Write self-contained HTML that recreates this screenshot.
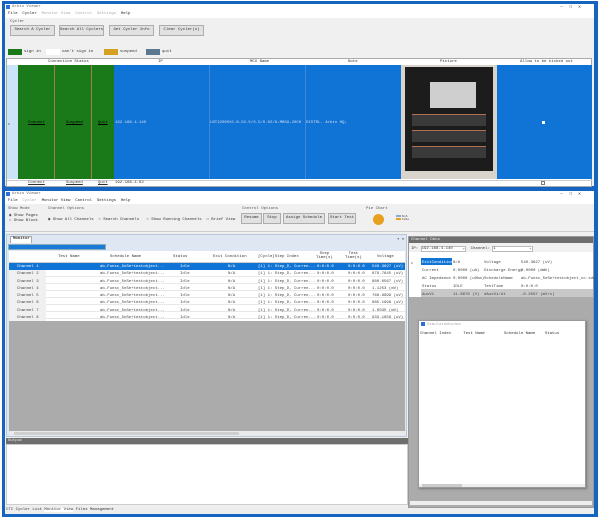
<!DOCTYPE html><html><head><style>
*{margin:0;padding:0;box-sizing:border-box}
body{width:600px;height:517px;background:#fff;position:relative;overflow:hidden;font-family:"Liberation Mono",monospace;font-size:4px;color:#333}
div{position:absolute}
.b{background:#e1e1e1;border:1px solid #adadad;text-align:center;line-height:9px;white-space:nowrap;overflow:hidden}
.t{white-space:nowrap}
</style></head><body>
<!-- top window -->
<div style="left:2px;top:1px;width:596px;height:189px;background:#1565c0"></div>
<div style="left:5px;top:4px;width:589px;height:182px;background:#f0f0f0"></div>
<div style="left:5px;top:4px;width:589px;height:6px;background:#fff"></div>
<div style="left:6px;top:5px;width:4px;height:4px;background:#2a6fd6"></div>
<div class="t" style="left:12px;top:5px;color:#666">Arbin Viewer</div>
<div class="t" style="left:560px;top:4px;color:#555;font-size:5px">–&nbsp;&nbsp;❐&nbsp;&nbsp;✕</div>
<div style="left:5px;top:10px;width:589px;height:8px;background:#fff"></div>
<div class="t" style="left:8px;top:12px;color:#222">File&nbsp; Cycler&nbsp; <span style="color:#aaa">Monitor View&nbsp; Control&nbsp; Settings</span>&nbsp; Help</div>
<div class="t" style="left:10px;top:20px;color:#555">Cycler</div>
<div class="b" style="left:10px;top:25px;width:45px;height:11px">Search A Cycler</div>
<div class="b" style="left:59px;top:25px;width:45px;height:11px">Search All Cyclers</div>
<div class="b" style="left:109px;top:25px;width:45px;height:11px">Get Cycler Info</div>
<div class="b" style="left:159px;top:25px;width:45px;height:11px">Clear Cycler(s)</div>
<div style="left:8px;top:49px;width:14px;height:6px;background:#1a7a1a"></div><div class="t" style="left:24px;top:50px">sign in</div>
<div style="left:46px;top:49px;width:14px;height:6px;background:#fff"></div><div class="t" style="left:62px;top:50px">can't sign in</div>
<div style="left:104px;top:49px;width:14px;height:6px;background:#d4a020"></div><div class="t" style="left:120px;top:50px">suspend</div>
<div style="left:146px;top:49px;width:14px;height:6px;background:#5a7890"></div><div class="t" style="left:162px;top:50px">quit</div>
<div style="left:6px;top:58px;width:586px;height:129px;background:#fff;border:1px solid #aaa"></div>
<div class="t" style="left:48px;top:60px">Connection Status</div>
<div class="t" style="left:158px;top:60px">IP</div>
<div class="t" style="left:250px;top:60px">MCU Name</div>
<div class="t" style="left:348px;top:60px">Note</div>
<div class="t" style="left:440px;top:60px">Picture</div>
<div class="t" style="left:520px;top:60px">Allow to be kicked out</div>
<div style="left:7px;top:65px;width:11px;height:114px;background:#cce4f7"></div>
<div class="t" style="left:8px;top:121px">▸</div>
<div style="left:18px;top:65px;width:96px;height:114px;background:#1a7a1a"></div>
<div style="left:54px;top:65px;width:1px;height:114px;background:#a08040"></div>
<div style="left:91px;top:65px;width:1px;height:114px;background:#a08040"></div>
<div class="t" style="left:28px;top:121px;text-decoration:underline;color:#000">Connect</div>
<div class="t" style="left:66px;top:121px;text-decoration:underline;color:#000">Suspend</div>
<div class="t" style="left:98px;top:121px;text-decoration:underline;color:#000">Quit</div>
<div style="left:114px;top:65px;width:287px;height:114px;background:#0f74d6"></div>
<div style="left:209px;top:65px;width:1px;height:114px;background:#3a8ae0"></div>
<div style="left:305px;top:65px;width:1px;height:114px;background:#3a8ae0"></div>
<div class="t" style="left:115px;top:121px;color:#dde">192.168.4.140</div>
<div class="t" style="left:210px;top:121px;color:#dde">LBT22000XC-B-5V-5/0.5/0.02/8-MBSA-20CH</div>
<div class="t" style="left:306px;top:121px;color:#dde">DISTRL- Arbin HQ;</div>
<div style="left:401px;top:65px;width:96px;height:114px;background:#d8d4cc"></div>
<div style="left:405px;top:67px;width:88px;height:104px;background:#1c1c1c"></div>
<div style="left:430px;top:82px;width:46px;height:26px;background:#cfcfcf"></div>
<div style="left:412px;top:114px;width:74px;height:12px;background:#3a3a3a;border-top:1px solid #b07050"></div>
<div style="left:412px;top:130px;width:74px;height:12px;background:#3a3a3a;border-top:1px solid #b07050"></div>
<div style="left:412px;top:146px;width:74px;height:12px;background:#3a3a3a;border-top:1px solid #b07050"></div>
<div style="left:497px;top:65px;width:95px;height:114px;background:#0f74d6"></div>
<div style="left:542px;top:121px;width:3px;height:3px;background:#fff"></div>
<div style="left:7px;top:180px;width:585px;height:1px;background:#ccc"></div>
<div class="t" style="left:28px;top:181px;text-decoration:underline">Connect</div>
<div class="t" style="left:66px;top:181px;text-decoration:underline">Suspend</div>
<div class="t" style="left:98px;top:181px;text-decoration:underline">Quit</div>
<div class="t" style="left:115px;top:181px">192.168.4.62</div>
<div style="left:541px;top:181px;width:4px;height:4px;border:1px solid #777"></div>

<!-- bottom window -->
<div style="left:2px;top:189px;width:596px;height:328px;background:#1565c0"></div>
<div style="left:5px;top:191px;width:589px;height:323px;background:#f0f0f0"></div>
<div style="left:5px;top:191px;width:589px;height:6px;background:#fff"></div>
<div style="left:6px;top:192px;width:4px;height:4px;background:#2a6fd6"></div>
<div class="t" style="left:12px;top:192px;color:#666">Arbin Viewer</div>
<div class="t" style="left:560px;top:191px;color:#555;font-size:5px">–&nbsp;&nbsp;❐&nbsp;&nbsp;✕</div>
<div style="left:5px;top:197px;width:589px;height:7px;background:#fff"></div>
<div class="t" style="left:8px;top:199px;color:#222">File&nbsp; <span style="color:#aaa">Cycler</span>&nbsp; Monitor View&nbsp; Control&nbsp; Settings&nbsp; Help</div>
<div class="t" style="left:8px;top:207px;color:#555">Show Mode</div>
<div class="t" style="left:9px;top:212px">◉ Show Pages</div>
<div class="t" style="left:9px;top:219px">○ Show Block</div>
<div class="t" style="left:48px;top:207px;color:#555">Channel Options</div>
<div class="t" style="left:48px;top:216px">◉ Show All Channels&nbsp;&nbsp;○ Search Channels&nbsp;&nbsp;&nbsp;○ Show Running Channels&nbsp;&nbsp;☐ Brief View</div>
<div class="t" style="left:242px;top:207px;color:#555">Control Options</div>
<div class="b" style="left:241px;top:213px;width:21px;height:11px">Resume</div>
<div class="b" style="left:263px;top:213px;width:18px;height:11px">Stop</div>
<div class="b" style="left:283px;top:213px;width:42px;height:11px">Assign Schedule</div>
<div class="b" style="left:328px;top:213px;width:28px;height:11px">Start Test</div>
<div class="t" style="left:366px;top:207px;color:#555">Pie Chart</div>
<div style="left:373px;top:214px;width:11px;height:11px;border-radius:50%;background:#e8a020"></div>
<div style="left:396px;top:215px;width:5px;height:2px;background:#8ac"></div>
<div style="left:396px;top:218px;width:5px;height:2px;background:#e8a020"></div>
<div class="t" style="left:402px;top:215px;font-size:3px">N/A<br>Idle</div>
<div style="left:5px;top:231px;width:589px;height:1px;background:#ccc"></div>
<!-- monitor -->
<div style="left:6px;top:234px;width:401px;height:203px;background:#dfe8f2;border:1px solid #b8c8d8"></div>
<div style="left:10px;top:236px;width:22px;height:7px;background:#fff;border:1px solid #aaa;border-bottom:none"></div>
<div class="t" style="left:13px;top:237px;font-weight:bold">Monitor</div>
<div class="t" style="left:397px;top:236px">▾ ✕</div>
<div style="left:8px;top:244px;width:98px;height:6px;background:#1a7ad8;border:1px solid #8ab"></div>
<div style="left:9px;top:251px;width:396px;height:180px;background:#ababab"></div>
<div style="left:9px;top:251px;width:396px;height:70px;background:#fff"></div>
<div style="left:9px;top:251px;width:396px;height:12px;background:#fff;border-bottom:1px solid #ccc"></div>
<div class="t" style="left:58px;top:255px">Test Name</div>
<div class="t" style="left:110px;top:255px">Schedule Name</div>
<div class="t" style="left:173px;top:255px">Status</div>
<div class="t" style="left:213px;top:255px">Exit Condition</div>
<div class="t" style="left:258px;top:255px">[Cycle]Step Index</div>
<div class="t" style="left:316px;top:252px;text-align:center">Step<br>Time(s)</div>
<div class="t" style="left:345px;top:252px;text-align:center">Test<br>Time(s)</div>
<div class="t" style="left:377px;top:255px">Voltage</div>
<div style="left:9px;top:263px;width:396px;height:7px;background:#0f74d6"></div>
<div style="left:9px;top:270px;width:37px;height:51px;background:#f0f0f0"></div>
<div style="left:46px;top:270px;width:359px;height:51px;background:repeating-linear-gradient(#fff 0 6px,#e8e8e8 6px 7px)"></div>
<div class="t" style="left:17px;top:264px;line-height:7.3px;color:#444"><span style="color:#fff">Channel 1</span><br>Channel 2<br>Channel 3<br>Channel 4<br>Channel 5<br>Channel 6<br>Channel 7<br>Channel 8</div>
<div class="t" style="left:100px;top:264px;line-height:7.3px;color:#444"><span style="color:#fff">ab-Funsc_5nSe+testobject...</span><br>ab-Funsc_5nSe+testobject...<br>ab-Funsc_5nSe+testobject...<br>ab-Funsc_5nSe+testobject...<br>ab-Funsc_5nSe+testobject...<br>ab-Funsc_5nSe+testobject...<br>ab-Funsc_5nSe+testobject...<br>ab-Funsc_5nSe+testobject...</div>
<div class="t" style="left:180px;top:264px;line-height:7.3px;color:#444"><span style="color:#fff">Idle</span><br>Idle<br>Idle<br>Idle<br>Idle<br>Idle<br>Idle<br>Idle</div>
<div class="t" style="left:228px;top:264px;line-height:7.3px;color:#444"><span style="color:#fff">N/A</span><br>N/A<br>N/A<br>N/A<br>N/A<br>N/A<br>N/A<br>N/A</div>
<div class="t" style="left:258px;top:264px;line-height:7.3px;color:#444"><span style="color:#fff">[1] 1: Step_D, Curren...</span><br>[1] 1: Step_D, Curren...<br>[1] 1: Step_D, Curren...<br>[1] 1: Step_D, Curren...<br>[1] 1: Step_D, Curren...<br>[1] 1: Step_D, Curren...<br>[1] 1: Step_D, Curren...<br>[1] 1: Step_D, Curren...</div>
<div class="t" style="left:317px;top:264px;line-height:7.3px;color:#444"><span style="color:#fff">0:0:0.0</span><br>0:0:0.0<br>0:0:0.0<br>0:0:0.0<br>0:0:0.0<br>0:0:0.0<br>0:0:0.0<br>0:0:0.0</div>
<div class="t" style="left:348px;top:264px;line-height:7.3px;color:#444"><span style="color:#fff">0:0:0.0</span><br>0:0:0.0<br>0:0:0.0<br>0:0:0.0<br>0:0:0.0<br>0:0:0.0<br>0:0:0.0<br>0:0:0.0</div>
<div class="t" style="left:372px;top:264px;line-height:7.3px;color:#444"><span style="color:#fff">540.3627 (uV)</span><br>879.7645 (uV)<br>880.0567 (uV)<br>1.1253 (mV)<br>768.8999 (uV)<br>685.1998 (uV)<br>1.0035 (mV)<br>933.1856 (uV)</div>
<div style="left:10px;top:431px;width:394px;height:5px;background:#eaeaea"></div>
<div style="left:14px;top:432px;width:225px;height:3px;background:#cfcfcf"></div>
<!-- output -->
<div style="left:6px;top:438px;width:402px;height:6px;background:#6e6e6e"></div>
<div class="t" style="left:8px;top:439px;color:#eee">Output</div>
<div style="left:6px;top:444px;width:402px;height:61px;background:#fff;border:1px solid #ccc"></div>
<div style="left:5px;top:506px;width:589px;height:8px;background:#eee"></div>
<div class="t" style="left:6px;top:508px">CTI Cycler List <span style="background:#fff">Monitor View</span> Files Management</div>
<!-- right panel -->
<div style="left:408px;top:236px;width:186px;height:272px;background:#ababab;border:1px solid #999"></div>
<div style="left:409px;top:237px;width:184px;height:6px;background:#6e6e6e"></div>
<div class="t" style="left:411px;top:238px;color:#eee">Channel Data</div>
<div style="left:409px;top:243px;width:184px;height:9px;background:#f0f0f0"></div>
<div class="t" style="left:411px;top:245px">IP: <span style="background:#fff;border:1px solid #bbb">192.168.4.140&nbsp;&nbsp;&nbsp;&nbsp;⌄</span>&nbsp; Channel: <span style="background:#fff;border:1px solid #bbb">1&nbsp;&nbsp;&nbsp;&nbsp;&nbsp;&nbsp;&nbsp;&nbsp;&nbsp;&nbsp;&nbsp;&nbsp;&nbsp;&nbsp;⌄</span></div>
<div style="left:409px;top:252px;width:184px;height:45px;background:#fff"></div>
<div class="t" style="left:411px;top:260px">▸</div>
<div style="left:421px;top:258px;width:31px;height:7px;background:#0f74d6"></div>
<div style="left:421px;top:289px;width:172px;height:8px;background:#c8c8c8"></div>
<div class="t" style="left:422px;top:259px;line-height:8px;color:#444"><span style="color:#fff">ExitCondition</span><br>Current<br>AC Impedance<br>Status<br>AuxV1</div>
<div class="t" style="left:453px;top:259px;line-height:8px;color:#444">N/A<br>0.0000 (uA)<br>0.0000 (uOhm)<br>IDLE<br>11.8670 (V)</div>
<div class="t" style="left:484px;top:259px;line-height:8px;color:#444">Voltage<br>Discharge Energy<br>ScheduleName<br>TestTime<br>dAuxV1/dt</div>
<div class="t" style="left:521px;top:259px;line-height:8px;color:#444">540.3627 (uV)<br>0.0000 (mWh)<br>ab-Funsc_5nSe+testobject_cc.sdx<br>0:0:0.0<br>-0.2597 (mV/s)</div>
<!-- sub window -->
<div style="left:418px;top:320px;width:168px;height:168px;background:#fff;border:1px solid #999;box-shadow:1px 1px 2px #777"></div>
<div style="left:421px;top:322px;width:4px;height:4px;background:#2a6fd6"></div>
<div class="t" style="left:427px;top:323px;color:#aaa">SimulateWindow</div>
<div class="t" style="left:420px;top:332px">Channel Index&nbsp;&nbsp;&nbsp;&nbsp; Test Name&nbsp;&nbsp;&nbsp;&nbsp;&nbsp;&nbsp;&nbsp; Schedule Name&nbsp;&nbsp;&nbsp; Status</div>
<div style="left:419px;top:484px;width:166px;height:3px;background:#eee"></div>
<div style="left:422px;top:484px;width:40px;height:3px;background:#ccc"></div>
<div style="left:410px;top:501px;width:182px;height:4px;background:#eee"></div>
</body></html>
